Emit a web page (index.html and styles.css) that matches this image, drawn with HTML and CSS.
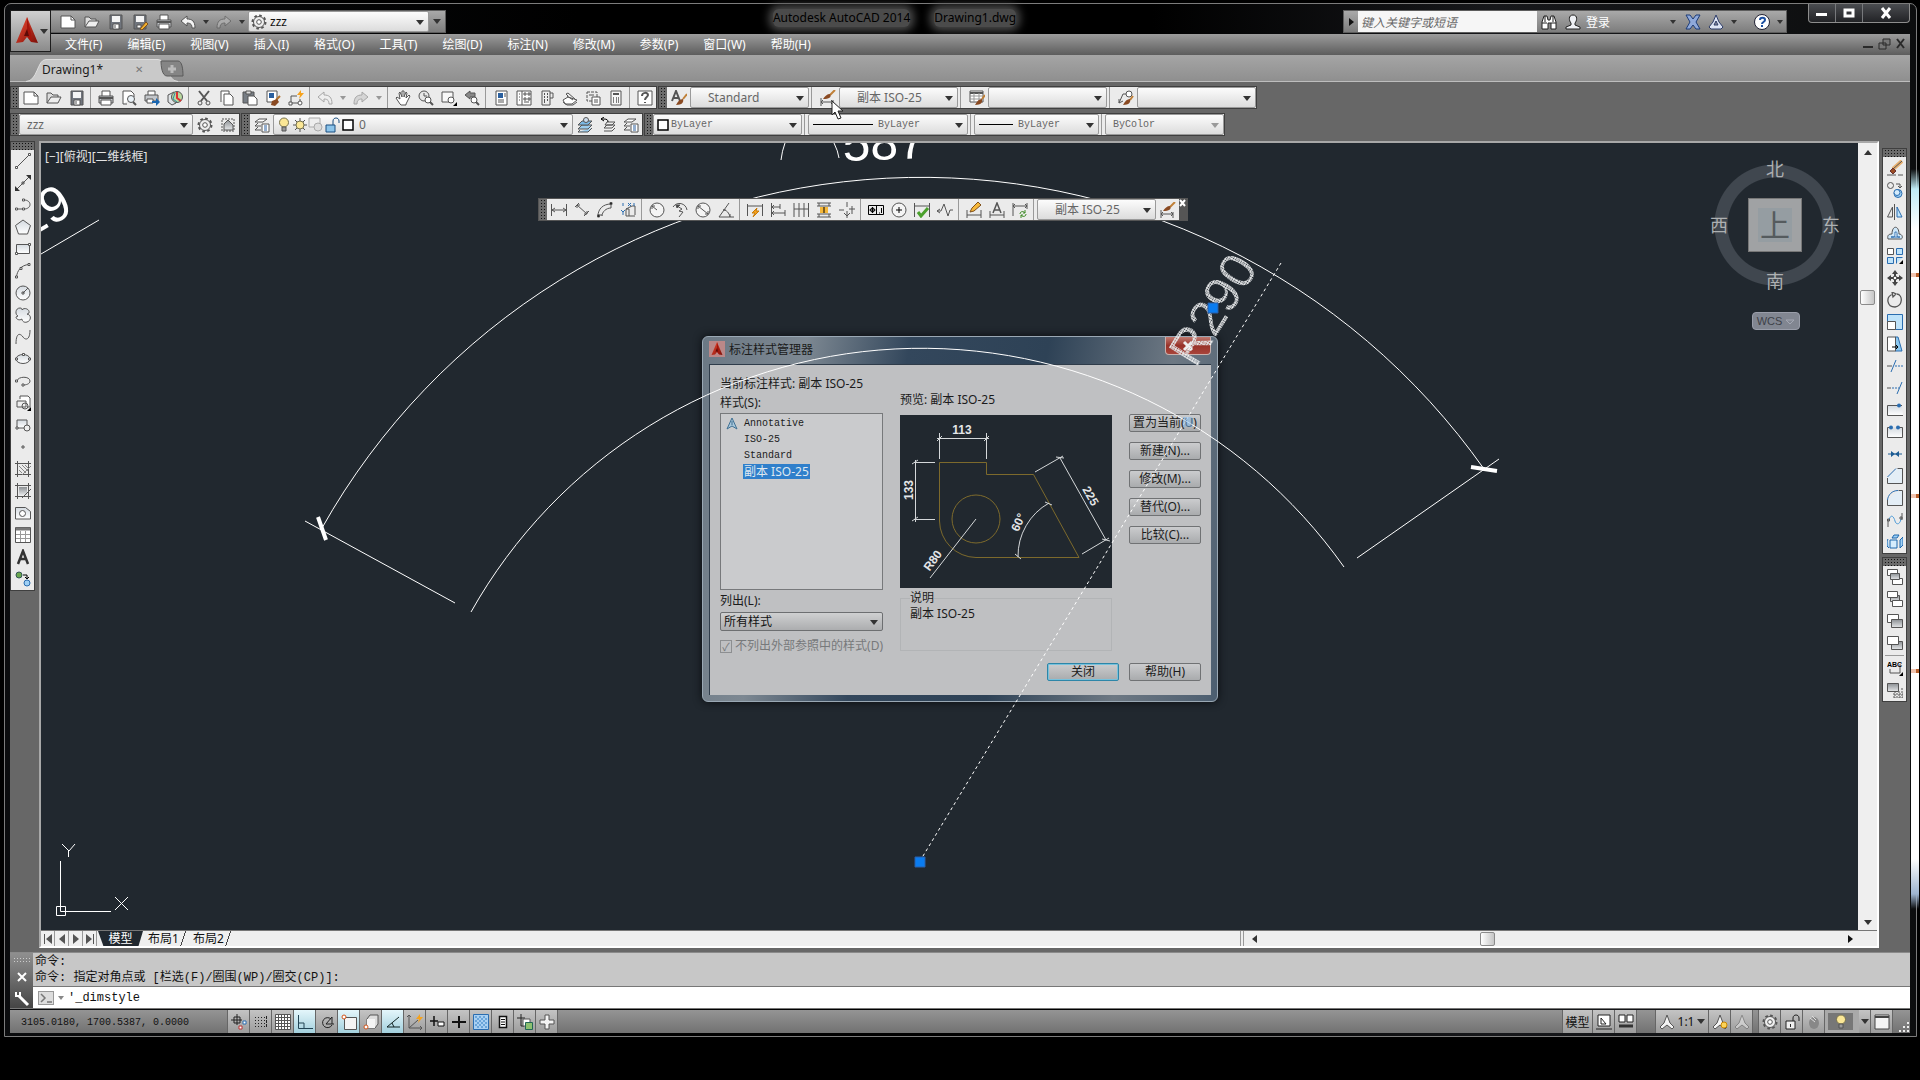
FILE: index.html
```html
<!DOCTYPE html>
<html lang="zh-CN">
<head>
    <meta charset="UTF-8">
    <meta name="viewport" content="width=device-width, initial-scale=1.0">
    <title>Autodesk AutoCAD 2014 - Drawing1.dwg</title>
    <link rel="stylesheet" href="styles.css">
</head>
<body>
    <!-- icon sprite -->
    <svg class="sprite" aria-hidden="true">
        <defs>
            <linearGradient id="g-red" x1="0" y1="0" x2="1" y2="1"><stop offset="0" stop-color="#f04a32"/><stop offset="1" stop-color="#7d0f08"/></linearGradient>
            <linearGradient id="g-grey" x1="0" y1="0" x2="0" y2="1"><stop offset="0" stop-color="#8c9094"/><stop offset="1" stop-color="#e4e6e8"/></linearGradient>
            <linearGradient id="g-paper" x1="0" y1="0" x2="0" y2="1"><stop offset="0" stop-color="#d4dae0"/><stop offset="1" stop-color="#fff"/></linearGradient>
            <pattern id="p-check" width="2" height="2" patternUnits="userSpaceOnUse"><path d="M0 0h1v1H0zM1 1h1v1H1z" fill="#fff" stroke="none"/><path d="M1 0h1v1H1z" fill="#aab0b5" stroke="none"/></pattern>
        </defs>
        <symbol id="i-logo" viewBox="0 0 24 28"><path d="M12 0L1 26l7-1 4-5 4 5 7 1z" fill="url(#g-red)" stroke="none"/><path d="M12 0l4 16 1 9-5-6z" fill="#a3150c" stroke="none"/><path d="M12 12l-3 7h5z" fill="#5d0a06" stroke="none"/></symbol>
        <symbol id="i-new" viewBox="0 0 16 16"><path d="M1 2h10l4 4v8H1z" fill="#fff"/><path d="M11 2v4h4"/></symbol>
        <symbol id="i-open" viewBox="0 0 16 16"><path d="M1 13V3h4l2 2h5v2" fill="#ddd"/><path d="M1 13l4-6h10l-3 6z" fill="#eee"/></symbol>
        <symbol id="i-save" viewBox="0 0 16 16"><path d="M2 1h12v14H2z" fill="#70757d"/><path d="M4 2h8v6H4z" fill="#f4f4f4" stroke="none"/><path d="M5 10h6v5H5z" fill="#fff"/><path d="M7 11v3"/></symbol>
        <symbol id="i-saveas" viewBox="0 0 16 16"><path d="M2 1h12v14H2z" fill="#70757d"/><path d="M4 2h8v6H4z" fill="#f4f4f4" stroke="none"/><path d="M5 11h4v3H5z" fill="#fff"/><path d="M8 15l6-7 2 2-6 6z" fill="#f0b030" stroke="#80501a"/></symbol>
        <symbol id="i-print" viewBox="0 0 16 16"><path d="M4 6V1h8v5" fill="#fff"/><path d="M1 6h14v7H1z" fill="#c3c6ca"/><path d="M3 10h10v5H3z" fill="#fff"/><path d="M1 8h14" stroke-width="2"/></symbol>
        <symbol id="i-undo" viewBox="0 0 16 16"><path d="M1 7l6-5v3c5 0 8 2 8 9h-3c0-3-1-5-5-5v3z" fill="#f4f4f4"/></symbol>
        <symbol id="i-redo" viewBox="0 0 16 16"><path d="M15 7L9 2v3C4 5 1 7 1 14h3c0-3 1-5 5-5v3z" fill="#bbb"/></symbol>
        <symbol id="i-gear" viewBox="0 0 16 16"><circle cx="8" cy="8" r="6.5" stroke-width="2" stroke-dasharray="2.6 2.4"/><circle cx="8" cy="8" r="5.5" fill="#eee"/><circle cx="8" cy="8" r="2.3" fill="#fff"/></symbol>
        <symbol id="i-preview" viewBox="0 0 16 16"><path d="M2 14V1h8l3 3v3M2 14h4" fill="#fff"/><circle cx="10" cy="9" r="3.5" fill="#eaf2f8"/><path d="M12 12l3 3" stroke-width="2"/></symbol>
        <symbol id="i-publish" viewBox="0 0 16 16"><path d="M4 5V1h7v4" fill="#fff"/><path d="M1 5h13v6H1z" fill="#c3c6ca"/><path d="M3 9h6v4H3z" fill="#fff"/><path d="M8 11h4V8l4 4-4 4v-3H8z" fill="#1a66b0" stroke="none"/></symbol>
        <symbol id="i-3dprint" viewBox="0 0 16 16"><path d="M1 5l6-3 2 11-4 2-4-3z" fill="#dfe3e6"/><circle cx="10" cy="7" r="5.5" fill="#b8d8a0"/><path d="M10 2v6l4 3" stroke="#d33" stroke-width="2"/><path d="M8 3l-2 6 4 3" stroke="#38a"/></symbol>
        <symbol id="i-cut" viewBox="0 0 16 16"><path d="M3 1l8 10M13 1L5 11" stroke-width="2"/><circle cx="4" cy="13" r="2"/><circle cx="12" cy="13" r="2"/></symbol>
        <symbol id="i-copy" viewBox="0 0 16 16"><path d="M2 12V1h8v3" fill="#fff"/><path d="M5 4h6l3 3v8H5z" fill="#fff"/></symbol>
        <symbol id="i-paste" viewBox="0 0 16 16"><path d="M1 2h11v11H1z" fill="#777d84"/><path d="M4 1h5v3H4z" fill="#ddd"/><path d="M6 6h6l3 3v6H6z" fill="#fff"/></symbol>
        <symbol id="i-match" viewBox="0 0 16 16"><path d="M2 1h10v11H2z" fill="#fff"/><path d="M4 3h5v5H4z" fill="#2a5f9e" stroke="none"/><path d="M15 6l-4 4" stroke="#b0702a" stroke-width="2"/><path d="M7 11l5-2 2 3-4 4-4-1z" fill="#8a4a22" stroke="none"/></symbol>
        <symbol id="i-block" viewBox="0 0 16 16"><path d="M3 6h6M3 6v7h9v-4"/><path d="M1 12h3v3H1z" fill="#fff"/><circle cx="12" cy="13" r="2" fill="#fff"/><path d="M13 0l-4 5h3l-1 4 5-6h-3z" fill="#f6a21c" stroke="none"/></symbol>
        <symbol id="i-pan" viewBox="0 0 16 16"><path d="M5 14L1 8l1-1 3 2-1-6 1-1 2 5V1h2v6l2-5 1 1-1 5 3-3 1 1-4 8v1H6z" fill="#fff"/></symbol>
        <symbol id="i-zoomrt" viewBox="0 0 16 16"><circle cx="6" cy="6" r="5" fill="#e8e8e8"/><path d="M6 3v3h3"/><circle cx="10" cy="10" r="3" fill="#fff"/><path d="M12 12l3 3" stroke-width="2"/></symbol>
        <symbol id="i-zoomwin" viewBox="0 0 16 16"><path d="M1 2h11v10H1z" fill="#f8f8f8"/><circle cx="10" cy="10" r="3" fill="#fff"/><path d="M12 16h4v-4z" fill="#000" stroke="none"/></symbol>
        <symbol id="i-zoomprev" viewBox="0 0 16 16"><path d="M1 5l5-4v2h5v4H6v2z" fill="#888"/><circle cx="10" cy="10" r="3" fill="#fff"/><path d="M12 12l3 3" stroke-width="2"/></symbol>
        <symbol id="i-props" viewBox="0 0 16 16"><path d="M3 1h11v14H3z" fill="#fff"/><path d="M5 3h5v5H5z" fill="#2a5f9e" stroke="none"/><path d="M5 10h6M5 12h6M12 3v4"/></symbol>
        <symbol id="i-dc" viewBox="0 0 16 16"><path d="M1 1h14v14H1z" fill="#fff"/><path d="M6 1v14M8 3h2v2H8zM12 3h2v2h-2zM8 8h2v2H8zM12 8h2v2h-2zM3 4h1M3 7h1M3 10h1M8 12h5"/></symbol>
        <symbol id="i-palette" viewBox="0 0 16 16"><path d="M3 1h8v14H3zM11 3h3v5h-3" fill="#eee"/><path d="M5 4h1M8 4h1M5 7h1M8 7h1M5 10h1M8 10h1M5 12h1" stroke-width="2"/></symbol>
        <symbol id="i-sheet" viewBox="0 0 16 16"><path d="M1 10l5-3 9 3-5 4H3z" fill="#fff"/><path d="M1 12l4 3h6l4-3M6 3l7 6M5 6l6 4M6 3l-2 1 2 2"/></symbol>
        <symbol id="i-markup" viewBox="0 0 16 16"><path d="M2 2h10v9H2z" stroke-dasharray="3 1"/><path d="M7 7h8v8H7z" fill="#fff"/><path d="M9 10h4M9 12h4M4 5h5"/></symbol>
        <symbol id="i-calc" viewBox="0 0 16 16"><path d="M3 1h10v14H3z" fill="#f6f6f6"/><path d="M5 4h6" stroke-width="2"/><path d="M5 8h1M8 8h1M10 8h1M5 10h1M8 10h1M10 10h1M5 12h1M8 12h1M10 12h1" stroke-width="1.5"/></symbol>
        <symbol id="i-help" viewBox="0 0 16 16"><path d="M1 1h14v14H1z" fill="#fff"/><path d="M5 6c0-4 6-4 6-1 0 2-3 2-3 5M8 12v1" stroke-width="2"/></symbol>
        <symbol id="i-textstyle" viewBox="0 0 16 16"><path d="M1 11L5 1l4 10M3 8h4" stroke-width="2"/><path d="M16 4l-4 5" stroke="#c08038" stroke-width="2"/><path d="M5 15c2-4 4-6 7-6 1 3-1 6-7 6z" fill="#8a4a22" stroke="none"/></symbol>
        <symbol id="i-dimstyle" viewBox="0 0 16 16"><path d="M1 8v8M13 10v6M1 12h12M3 10l-2 2 2 2M11 10l2 2-2 2"/><path d="M15 0l-5 5" stroke="#c08038" stroke-width="2"/><path d="M3 9c2-3 4-5 7-5 2 3-1 5-7 5z" fill="#8a4a22" stroke="none"/></symbol>
        <symbol id="i-tablestyle" viewBox="0 0 16 16"><path d="M1 1h13v11H1z" fill="#fff"/><path d="M1 3h13" stroke-width="2"/><path d="M1 6h13M1 9h13M5 3v9M10 3v9" stroke="#999"/><path d="M16 5l-3 4" stroke="#c08038" stroke-width="2"/><path d="M6 15c2-4 4-6 7-6 1 3-1 6-7 6z" fill="#8a4a22" stroke="none"/></symbol>
        <symbol id="i-mlstyle" viewBox="0 0 16 16"><path d="M1 13l4-9h5M1 9v4l4-2"/><circle cx="11" cy="4" r="3" fill="#fff"/><path d="M15 6l-3 4" stroke="#c08038" stroke-width="2"/><path d="M5 15c2-4 4-6 7-6 1 3-1 6-7 6z" fill="#8a4a22" stroke="none"/></symbol>
        <symbol id="i-wsave" viewBox="0 0 16 16"><path d="M2 2h12v12H2z" stroke-dasharray="2 1"/><path d="M4 13V7l4-4 5 5v5z" fill="url(#g-grey)"/></symbol>
        <symbol id="i-layers" viewBox="0 0 16 16"><path d="M1 5l4-3h8l-4 3zM1 9l3-3M1 9h6M1 13l3-3M1 13h6" fill="#fff"/><path d="M8 7h7v8H8z" fill="#fff"/><path d="M10 9h3M10 11h3M10 13h3" stroke="#2a5f9e"/></symbol>
        <symbol id="i-laycur" viewBox="0 0 16 16"><path d="M1 12l4-4h10l-4 4zM1 15l2-2M1 15h10l4-4" fill="#9ccdee"/><path d="M1 8l4-4h10l-4 4z" fill="#7ab8e4"/><circle cx="9" cy="3" r="2.5" fill="#cde"/></symbol>
        <symbol id="i-layprev" viewBox="0 0 16 16"><path d="M4 11l3-3h8l-3 3zM4 14h8l3-3M5 8l2-3h8l-3 3z" fill="#eee"/><path d="M1 2h3c3 0 4 1 4 3M4 0L1 2l3 2" stroke="#000"/></symbol>
        <symbol id="i-bulb" viewBox="0 0 16 16"><circle cx="8" cy="5.5" r="4.5" fill="#fbe796" stroke="#77724e"/><path d="M6 10h4v4H6z" fill="#999"/></symbol>
        <symbol id="i-sun" viewBox="0 0 16 16"><path d="M8 1v14M1 8h14M3 3l10 10M13 3L3 13" stroke="#555"/><circle cx="8" cy="8" r="4" fill="#fbe796" stroke="#77724e"/></symbol>
        <symbol id="i-vpfreeze" viewBox="0 0 16 16"><path d="M1 1h11v9H1z" stroke="#aaa" fill="#eee"/><circle cx="10" cy="10" r="4" fill="#ddd" stroke="#aaa"/></symbol>
        <symbol id="i-lock" viewBox="0 0 16 16"><path d="M2 8h9v7H2z" fill="#8cc4ea" stroke="#1b4f80"/><path d="M9 8V4c0-4 6-4 6 0v2" stroke="#1b4f80"/></symbol>
        <symbol id="i-swatch" viewBox="0 0 16 16"><path d="M3 3h10v10H3z" fill="#fff" stroke="#000" stroke-width="1.5"/></symbol>
        <!-- draw -->
        <symbol id="i-line" viewBox="0 0 16 16"><path d="M2 14L14 2"/><path d="M.5 13.500h2v2h-2zM13.500.5h2v2h-2z" fill="#fff"/></symbol>
        <symbol id="i-xline" viewBox="0 0 16 16"><path d="M1 15L15 1M7 7h2v2H7z"/><path d="M0 16v-5l5 5zM16 0v5l-5-5z" fill="#333" stroke="none"/></symbol>
        <symbol id="i-pline" viewBox="0 0 16 16"><path d="M2 12h7c8 0 8-9 0-9"/><path d="M.5 11h2v2h-2zM7.500 11h2v2h-2zM7.500 2h2v2h-2z" fill="#fff"/></symbol>
        <symbol id="i-polygon" viewBox="0 0 16 16"><path d="M8 1l7.500 5.500L12.500 15h-9L.5 6.500z" fill="url(#g-paper)"/></symbol>
        <symbol id="i-rect" viewBox="0 0 16 16"><path d="M1.500 3.500h13v9h-13z" fill="url(#g-paper)"/><path d="M.5 11.500h2v2h-2zM13.500 2.500h2v2h-2z" fill="#fff"/></symbol>
        <symbol id="i-arc" viewBox="0 0 16 16"><path d="M1.500 14C2 8 6 2 14 1.500"/><path d="M.5 13h2v2h-2zM5 4.500h2v2H5zM13 .5h2v2h-2z" fill="#fff"/></symbol>
        <symbol id="i-circle" viewBox="0 0 16 16"><circle cx="8" cy="8" r="7" fill="url(#g-paper)"/><path d="M8 8l5-5M7 7h2v2H7z"/></symbol>
        <symbol id="i-cloud" viewBox="0 0 16 16"><path d="M3 9C0 8 0 1 5 1c2 0 2 1 2 2 2-3 8-1 7 3-1 1-2 1-2 1 5 1 4 7 0 8-3 1-5-1-5-3-3 2-6 0-6-2z" fill="url(#g-paper)"/></symbol>
        <symbol id="i-spline" viewBox="0 0 16 16"><path d="M1 15C1 2 6 5 8 8s7 4 7-7"/></symbol>
        <symbol id="i-ellipse" viewBox="0 0 16 16"><ellipse cx="8" cy="8" rx="7" ry="4.5" fill="url(#g-paper)"/><path d="M.5 7h2v2h-2zM13.500 7h2v2h-2zM7.500 2.500h2v2h-2z" fill="#fff"/></symbol>
        <symbol id="i-earc" viewBox="0 0 16 16"><path d="M2 8c1-5 13-5 13 0 0 3-4 4-7 4"/><path d="M.5 7h2v2h-2zM7 11h2v2H7z" fill="#fff"/></symbol>
        <symbol id="i-insert" viewBox="0 0 16 16"><path d="M5 4V1h8l2 2v9h-3" fill="#fff"/><path d="M2 12V6h9v6z" fill="#eee"/><circle cx="10" cy="11" r="3"/><path d="M12 16h4v-4z" fill="#000" stroke="none"/></symbol>
        <symbol id="i-mkblock" viewBox="0 0 16 16"><path d="M2 11V3h10v8z" fill="url(#g-paper)"/><circle cx="12" cy="11" r="3" fill="#eee"/><path d="M1 10h2v2H1z" fill="#fff"/></symbol>
        <symbol id="i-point" viewBox="0 0 16 16"><path d="M7 7h2v2H7z"/></symbol>
        <symbol id="i-hatch" viewBox="0 0 16 16"><path d="M0 2.500h16M0 13.500h16M2.500 0v16M13.500 0v16"/><path d="M4 5l7 7M4 9l3 3M7 4l6 6M10 4l3 3M7 14l9-9" stroke="#888"/></symbol>
        <symbol id="i-gradient" viewBox="0 0 16 16"><path d="M4 4h8v8H4z" fill="url(#g-grey)" stroke="none"/><path d="M0 2.500h16M0 13.500h16M2.500 0v16M13.500 0v16M7 15l9-9"/></symbol>
        <symbol id="i-region" viewBox="0 0 16 16"><path d="M.5 14V2.500h10l5 4V14z" fill="url(#g-paper)"/><circle cx="7.5" cy="8.5" r="3" fill="#fff"/></symbol>
        <symbol id="i-table" viewBox="0 0 16 16"><path d="M.5.5h15v15H.5z" fill="#fff"/><path d="M1 2h14" stroke="#777" stroke-width="3"/><path d="M1 7.500h14M1 11.500h14M5.500 4v11M10.500 4v11" stroke="#999"/></symbol>
        <symbol id="i-mtext" viewBox="0 0 16 16"><path d="M3 15L8 2l5 13M5 10h6" stroke="#333" stroke-width="2.5"/></symbol>
        <symbol id="i-addsel" viewBox="0 0 16 16"><circle cx="4" cy="4" r="3" fill="#6aa84f" stroke="#355"/><circle cx="12" cy="12" r="3" fill="#9fd0f5" stroke="#2a6db0"/><path d="M8 4h4v4M10 6l2 2 2-2" stroke="#000"/></symbol>
        <!-- modify -->
        <symbol id="i-erase" viewBox="0 0 16 16"><path d="M0 15h9M11 15h5"/><path d="M15 1L6 9" stroke="#e8b070" stroke-width="4"/><path d="M15 1L6 9"/><path d="M3 11l3-3 3 3-3 3z" fill="#9a4a22" stroke="#633"/></symbol>
        <symbol id="i-mcopy" viewBox="0 0 16 16"><circle cx="3.5" cy="3.5" r="3"/><path d="M9 2h4v4M11 4l2 2 2-2"/><circle cx="11" cy="11.5" r="4" fill="#9fd0f5" stroke="#2a6db0"/><circle cx="10" cy="10.5" r="3" fill="#d5ecfc" stroke="#2a6db0"/></symbol>
        <symbol id="i-mirror" viewBox="0 0 16 16"><path d="M7.500 0v16"/><path d="M5.500 3v10H.5z"/><path d="M10 3v10h5z" fill="#bfe3fa" stroke="#2a6db0"/></symbol>
        <symbol id="i-offset" viewBox="0 0 16 16"><path d="M1 13c-1-4 1-5 4-5C5-1 12-1 12 8c4 0 4 5 2 5z" fill="#cfe8fa"/><path d="M4 11h2c2 0 2-1 2-5 2 0 2 0 2 3s2 2 3 2z" stroke="#2a6db0" fill="#fff"/></symbol>
        <symbol id="i-array" viewBox="0 0 16 16"><path d="M.5.5h6v6h-6z" fill="#fff"/><path d="M9.500.5h6v6h-6zM.5 9.500h6v6h-6zM9.500 15.500v-6h6" fill="#bfe3fa" stroke="#2a6db0"/><path d="M12 16h4v-4z" fill="#000" stroke="none"/></symbol>
        <symbol id="i-move" viewBox="0 0 16 16"><path d="M8 0l3 4H9v2H7V4H5zM8 16l3-4H9v-2H7v2H5zM0 8l4-3v2h2v2H4v2zM16 8l-4-3v2h-2v2h2v2z" fill="#444" stroke="none"/><path d="M6.500 6.500h3v3h-3z" fill="#fff"/></symbol>
        <symbol id="i-rotate" viewBox="0 0 16 16"><path d="M6 2C-2 5 0 15 8 15c8-1 8-12 2-13M5 0l4 2-3 3z" stroke-width="1.3"/></symbol>
        <symbol id="i-scale" viewBox="0 0 16 16"><path d="M.5.5h15v15h-15z" fill="#bfe3fa" stroke="#2a6db0"/><path d="M.5 7.500h8v8h-8z" fill="#fff"/></symbol>
        <symbol id="i-stretch" viewBox="0 0 16 16"><path d="M8 1h3l4 14H8z" fill="#8cc8f0" stroke="#2a6db0"/><path d="M.5 1h8v14h-8z" fill="#fff"/><path d="M5 11h6M9 9l2 2-2 2" stroke="#000"/></symbol>
        <symbol id="i-trim" viewBox="0 0 16 16"><path d="M0 8h5"/><path d="M4 14L9 2" stroke="#2a6db0"/><path d="M8 8h8" stroke="#2a6db0" stroke-dasharray="2 1"/></symbol>
        <symbol id="i-extend" viewBox="0 0 16 16"><path d="M0 8h4"/><path d="M10 14l5-12" stroke="#2a6db0"/><path d="M5 8h7" stroke="#2a6db0" stroke-dasharray="2 1"/></symbol>
        <symbol id="i-breakp" viewBox="0 0 16 16"><path d="M15 3.500H.5v10H16" fill="url(#g-paper)"/><circle cx="12" cy="3.5" r="2" fill="#2a6db0" stroke="none"/></symbol>
        <symbol id="i-break" viewBox="0 0 16 16"><path d="M4 3.500H.5v10h15v-10H12" fill="url(#g-paper)"/><circle cx="4" cy="3.5" r="2" fill="#2a6db0" stroke="none"/><circle cx="11" cy="3.5" r="2" fill="#2a6db0" stroke="none"/></symbol>
        <symbol id="i-join" viewBox="0 0 16 16"><path d="M1 8h14" stroke="#1d5c94"/><path d="M4 5l4 3-4 3zM12 5L8 8l4 3z" fill="#1d5c94" stroke="none"/></symbol>
        <symbol id="i-chamfer" viewBox="0 0 16 16"><path d="M.5 9v6.500h15V.5H10z" fill="#e4eef6" stroke="none"/><path d="M.5 10v5.500h15V.5h-5"/><path d="M.5 9L9 .5" stroke="#2a6db0"/></symbol>
        <symbol id="i-fillet" viewBox="0 0 16 16"><path d="M.5 10v5.500h15V.5h-4" fill="#e4eef6"/><path d="M.5 10C1 5 5 .5 11 .5" stroke="#2a6db0"/></symbol>
        <symbol id="i-blend" viewBox="0 0 16 16"><path d="M1 15V7M15 1v7"/><path d="M2 8c2-7 5-3 6 1s5 4 6-2" stroke="#4b9ad8"/><path d="M.5 7h2v2h-2zM13 5h2v2h-2z"/></symbol>
        <symbol id="i-explode" viewBox="0 0 16 16"><path d="M3 6h7v8H3z" fill="#d5ecfc" stroke="#1d66ac"/><path d="M5 4l2-3h5l-2 3zM13 6l3-3v8l-3 3zM1 5L0 7v5l2 2" fill="#9fd0f5" stroke="#1d66ac"/></symbol>
        <symbol id="i-front" viewBox="0 0 16 16"><path d="M.5.5h10v6H.5zM5.500 9.500h10v6h-10z" fill="#fff"/><path d="M3.500 4.500h9v6h-9z" fill="url(#g-grey)"/></symbol>
        <symbol id="i-back" viewBox="0 0 16 16"><path d="M3.500 4.500h9v6h-9z" fill="url(#g-grey)"/><path d="M.5.5h10v6H.5zM5.500 9.500h10v6h-10z" fill="#fff"/></symbol>
        <symbol id="i-above" viewBox="0 0 16 16"><path d="M.5 1.500h11v8H.5z" fill="#fff"/><path d="M4.500 6.500h11v8h-11z" fill="url(#g-grey)"/></symbol>
        <symbol id="i-under" viewBox="0 0 16 16"><path d="M4.500 6.500h11v8h-11z" fill="url(#g-grey)"/><path d="M.5 1.500h11v8H.5z" fill="#fff"/></symbol>
        <symbol id="i-annfront" viewBox="0 0 16 16"><path d="M3 9v4h10V4"/><path d="M12 16h4v-4z" fill="#000" stroke="none"/></symbol>
        <symbol id="i-hatchback" viewBox="0 0 16 16"><path d="M6 12h10M6 15h10M8 9v7M12 9v7M15 6v10" stroke-dasharray="2 1"/><path d="M.5 1.500h11v8H.5z" fill="url(#g-grey)"/></symbol>
        <!-- dimension -->
        <symbol id="d-lin" viewBox="0 0 16 16"><path d="M.5 2v12M15.500 2v12M1 8h14M4 6L1 8l3 2M12 6l3 2-3 2"/></symbol>
        <symbol id="d-ali" viewBox="0 0 16 16"><path d="M1 5l4-4M10 14l5-5M3 3l10 9M3 6V3h3M13 9v3h-3"/></symbol>
        <symbol id="d-arc" viewBox="0 0 16 16"><path d="M1 14C1 7 6 2 14 2M5 14c0-4 4-8 9-8M.5 13h5M14 .5V6"/><path d="M.5 13h2v2h-2zM13 .5h2v2h-2z" fill="#000"/></symbol>
        <symbol id="d-ord" viewBox="0 0 16 16"><path d="M6 7h3v7M6 14h9M6 14V7l6-3h3v9"/><path d="M3 1v3M8 1l3 3M11 1L8 4M14 1v3M1 8l2 2v3M5 8l-2 2" stroke="#2a6db0"/></symbol>
        <symbol id="d-rad" viewBox="0 0 16 16"><circle cx="8" cy="8" r="7" fill="#f4f4f4"/><path d="M8 8L3 4M3 7V4h3"/></symbol>
        <symbol id="d-jog" viewBox="0 0 16 16"><path d="M1 5c4-6 13-4 14 3M5 4l5 3-3 2 4 1-4 5"/><path d="M4 3h4l-3 3z" fill="#444"/></symbol>
        <symbol id="d-dia" viewBox="0 0 16 16"><circle cx="8" cy="8" r="7" fill="#f4f4f4"/><path d="M3 4l10 8M3 7V4h3M13 9v3h-3"/></symbol>
        <symbol id="d-ang" viewBox="0 0 16 16"><path d="M11 1L1 15h15M5 8c4 0 6 3 7 7M5 8h3M12 12v3"/></symbol>
        <symbol id="d-quick" viewBox="0 0 16 16"><path d="M.5 2v12M15.500 2v12M1 4h14"/><path d="M10 6l-5 5h3l-2 4 6-6H9z" fill="#f6a21c" stroke="#c77a08"/></symbol>
        <symbol id="d-base" viewBox="0 0 16 16"><path d="M1.500 1v14M10 2v5M15 8v6M2 5h8M2 11h13M4 3L2 5l2 2M4 9l-2 2 2 2"/></symbol>
        <symbol id="d-cont" viewBox="0 0 16 16"><path d="M1 1v14M6 1v14M11 1v14M15.500 1v14M1 7h15"/></symbol>
        <symbol id="d-space" viewBox="0 0 16 16"><path d="M1 1h14M1 15h14M1 4h14M1 12h14M3 1v3M13 1v3M3 12v3M13 12v3"/><path d="M4 5h8v6H4z" fill="#f6b83a" stroke="none"/><path d="M8 5v6" stroke="#000"/></symbol>
        <symbol id="d-break" viewBox="0 0 16 16"><path d="M8 0v5M8 9v7M0 8h5M10 7h6M13 4v8M5 11l3 3 3-3"/></symbol>
        <symbol id="d-tol" viewBox="0 0 16 16"><path d="M.5 3.500h15v9H.5zM8.500 4v8M11 11h1M13.500 6v5" stroke="#000"/><circle cx="4.5" cy="8" r="2" stroke="#000"/><path d="M4.500 5v6M1.500 8h6" stroke="#000"/></symbol>
        <symbol id="d-center" viewBox="0 0 16 16"><circle cx="8" cy="8" r="7" fill="#f4f4f4"/><path d="M8 5v6M5 8h6" stroke="#000"/></symbol>
        <symbol id="d-insp" viewBox="0 0 16 16"><path d="M.5 1v14M15.500 1v14M1 4h14"/><path d="M4 10l3 4 7-8" stroke="#4aa02c" stroke-width="3"/></symbol>
        <symbol id="d-jogl" viewBox="0 0 16 16"><path d="M0 9h4l3-7 4 12 2-6h3M0 9l3-2M0 9l3 2"/></symbol>
        <symbol id="d-edit" viewBox="0 0 16 16"><path d="M1 8v8M15 8v8M1 13h14"/><path d="M4 10l2-4 6-6 3 3-7 6z" fill="#f6b83a" stroke="#80501a"/></symbol>
        <symbol id="d-tedit" viewBox="0 0 16 16"><path d="M1 9v7M15 9v7M1 13h14"/><path d="M4 11L8 1l4 10M5 8h6" stroke-width="1.5"/></symbol>
        <symbol id="d-upd" viewBox="0 0 16 16"><path d="M1 1v13M15 1v6M1 4h14M3 2L1 4l2 2M13 2l2 2-2 2"/><path d="M8 12c0-3 4-3 5-1M14 12c0 3-4 3-5 1M13 8v3h-2M9 16v-3h2" stroke="#3b8a22"/></symbol>
        <!-- status bar -->
        <symbol id="s-infer" viewBox="0 0 16 16"><path d="M0 6h11M6 0v11M3 3h6v6H3z" stroke="#222"/><path d="M12 7h3v3h-3z" fill="#fff" stroke="#2a6db0"/><path d="M8 12h3v3H8z" fill="#fff" stroke="#b33"/></symbol>
        <symbol id="s-snap" viewBox="0 0 16 16"><path d="M2 3.500h10M2 6.500h10M2 9.500h10M2 12.500h10" stroke="#222" stroke-dasharray="1 2"/><path d="M13.500 2v12" stroke="#222" stroke-dasharray="3 1"/></symbol>
        <symbol id="s-grid" viewBox="0 0 16 16"><path d="M.5.5h15v15H.5z" fill="#fff"/><path d="M3.500 0v16M6.500 0v16M9.500 0v16M12.500 0v16M0 3.500h16M0 6.500h16M0 9.500h16M0 12.500h16"/></symbol>
        <symbol id="s-ortho" viewBox="0 0 16 16"><path d="M1.500 1v13.500H16M2 9h5v5" stroke="#245"/></symbol>
        <symbol id="s-polar" viewBox="0 0 16 16"><path d="M12 5A5 5 0 1 0 13 11M7 10h8M7 10l6-7v7" stroke="#222"/></symbol>
        <symbol id="s-osnap" viewBox="0 0 16 16"><path d="M3.500 3.500h12v12h-12z" fill="#f4f4f4"/><circle cx="3" cy="3" r="2" fill="#fff" stroke="#d2541a"/></symbol>
        <symbol id="s-3dosnap" viewBox="0 0 16 16"><path d="M4 5l3-4h8v9l-3 4H4z" fill="#ddd"/><path d="M4 5h8v9H4z" fill="#f4f4f4" stroke="none"/><circle cx="3" cy="13" r="2" fill="#fff" stroke="#d2541a"/></symbol>
        <symbol id="s-otrack" viewBox="0 0 16 16"><path d="M14 3L2 13h13M7 9l2 4" stroke="#122"/></symbol>
        <symbol id="s-ducs" viewBox="0 0 16 16"><path d="M2 1v13h13M2 14L11 6M0 3l2-2 2 2M13 12l2 2-2 2"/><path d="M13 0L9 5h3l-1 4 5-6h-3z" fill="#f6a21c" stroke="none"/></symbol>
        <symbol id="s-dyn" viewBox="0 0 16 16"><path d="M5 2v10M1 7h8" stroke="#111" stroke-width="1.5"/><path d="M9 8h6v4H9z" fill="#fff" stroke="#111"/></symbol>
        <symbol id="s-lwt" viewBox="0 0 16 16"><path d="M8 2v12M1 8h14" stroke="#111" stroke-width="2"/></symbol>
        <symbol id="s-tpy" viewBox="0 0 16 16"><path d="M.5.5h15v15H.5z" fill="#a9d0f2" stroke="#2a6db0"/><path d="M2 3h12M2 7h12M2 11h12" stroke="#6aa5da" stroke-width="2" stroke-dasharray="2 2"/><path d="M4 5h10M4 9h10M4 13h10" stroke="#6aa5da" stroke-width="2" stroke-dasharray="2 2"/></symbol>
        <symbol id="s-qp" viewBox="0 0 16 16"><path d="M4.500 2.500h7v11h-7z" fill="#fff" stroke="#111" stroke-width="1.5"/><path d="M6 5.500h4M6 8h4M6 10.500h4" stroke="#111"/></symbol>
        <symbol id="s-sc" viewBox="0 0 16 16"><path d="M0 4h8M4 0v8M4 8v4h3" stroke="#222"/><path d="M6 5h7v7H6z" fill="#fff"/><path d="M8.500 8.500h7v7h-7z" fill="#8cc070" stroke="#265"/></symbol>
        <symbol id="s-am" viewBox="0 0 16 16"><path d="M6 1h4v5h5v4h-5v5H6v-5H1V6h5z" fill="#f4f4f4"/></symbol>
        <symbol id="s-layout" viewBox="0 0 16 16"><path d="M2 1h12v11H2z" fill="#fff" stroke="#222"/><path d="M5 4l5 6H5zM0 15h16" stroke="#222"/></symbol>
        <symbol id="s-views" viewBox="0 0 16 16"><path d="M1 1h6v7H1zM9 1h6v7H9z" fill="#fff" stroke="#222"/><path d="M1 12h14" stroke="#333" stroke-width="3"/></symbol>
        <symbol id="s-ann" viewBox="0 0 16 16"><path d="M8 1l3 8 4 4-2 2-5-4-5 4-2-2 4-4z" fill="#f4f4f4"/></symbol>
        <symbol id="s-lock" viewBox="0 0 16 16"><path d="M2 7h9v8H2z" fill="#eee" stroke="#222"/><path d="M9 7V4c0-4 6-4 6 0v3M6.500 10v3" stroke="#222"/></symbol>
        <symbol id="s-hw" viewBox="0 0 16 16"><ellipse cx="8" cy="9" rx="5" ry="6" fill="#888" stroke="none"/><path d="M4 4l5 4M6 2l4 4" stroke="#ddd"/></symbol>
        <symbol id="s-clean" viewBox="0 0 16 16"><path d="M1 1h14v14H1z" fill="#f4f4f4" stroke="#444"/><path d="M1 3h14" stroke="#444" stroke-width="2"/></symbol>
        <symbol id="t-find" viewBox="0 0 16 16"><path d="M1 8l2-6h3l1 4h2l1-4h3l2 6v7h-5V9H7v6H1z" fill="#fff" stroke="#222"/><path d="M1 9h5M10 9h5M4 2v6M12 2v6" stroke="#222"/></symbol>
        <symbol id="t-user" viewBox="0 0 16 16"><path d="M8 1c5 0 4 6 2 8v2l5 2v2H1v-2l5-2V9C4 7 3 1 8 1z" fill="#eef0f4" stroke="#222"/></symbol>
        <symbol id="t-x" viewBox="0 0 16 16"><path d="M1 1h4l3 4 3-4h4l-4 7 4 7h-4l-3-4-3 4H1l4-7z" fill="#8fa9da" stroke="#1d3c78"/></symbol>
        <symbol id="t-a360" viewBox="0 0 16 16"><path d="M8 1l3 7 4 5-2 2H3l-2-2 4-5z" fill="#dde4f5" stroke="#2d3c68"/><path d="M8 7l2 4H6z" fill="#889" stroke="#2d3c68"/></symbol>
        <symbol id="t-help" viewBox="0 0 16 16"><circle cx="8" cy="8" r="7.5" fill="#fff" stroke="#223"/><path d="M6 6c0-3 5-3 5 0 0 2-3 2-3 4M8 11v2" stroke="#1c4fa0" stroke-width="2"/></symbol>
    </svg>

    <div class="app">
        <button class="app-menu" aria-label="应用程序菜单"><svg class="logo"><use href="#i-logo"/></svg><i class="tri"></i></button>

        <header class="title-bar">
            <div class="quick-access">
                <button class="tb" aria-label="新建"><svg class="ic"><use href="#i-new"/></svg></button>
                <button class="tb" aria-label="打开"><svg class="ic"><use href="#i-open"/></svg></button>
                <button class="tb" aria-label="保存"><svg class="ic"><use href="#i-save"/></svg></button>
                <button class="tb" aria-label="另存为"><svg class="ic"><use href="#i-saveas"/></svg></button>
                <button class="tb" aria-label="打印"><svg class="ic"><use href="#i-print"/></svg></button>
                <button class="tb" aria-label="放弃"><svg class="ic"><use href="#i-undo"/></svg></button>
                <button class="tb-arrow" aria-label="放弃列表"><i class="tri"></i></button>
                <button class="tb" aria-label="重做"><svg class="ic dim"><use href="#i-redo"/></svg></button>
                <button class="tb-arrow" aria-label="重做列表"><i class="tri"></i></button>
                <span class="combo workspace-combo"><svg class="ic combo-icon"><use href="#i-gear"/></svg><select aria-label="工作空间"><option>zzz</option></select></span>
                <button class="qa-more" aria-label="自定义"><i class="tri"></i></button>
            </div>
            <div class="caption"><span>Autodesk AutoCAD 2014</span><span>Drawing1.dwg</span></div>
            <div class="info-center">
                <button class="info-toggle" aria-label="展开"><i class="tri tri-right"></i></button>
                <input class="info-search" type="text" placeholder="键入关键字或短语" aria-label="搜索">
                <button class="tb" aria-label="查找"><svg class="ic"><use href="#t-find"/></svg></button>
                <button class="sign-in"><svg class="ic"><use href="#t-user"/></svg>登录<i class="tri"></i></button>
                <button class="tb" aria-label="Exchange"><svg class="ic"><use href="#t-x"/></svg></button>
                <button class="tb" aria-label="360"><svg class="ic"><use href="#t-a360"/></svg></button>
                <button class="tb-arrow" aria-label="更多"><i class="tri"></i></button>
                <button class="tb info-help" aria-label="帮助"><svg class="ic"><use href="#t-help"/></svg></button>
                <button class="tb-arrow" aria-label="帮助列表"><i class="tri"></i></button>
            </div>
            <div class="win-buttons">
                <button aria-label="最小化"><svg width="14" height="14"><path d="M1 7h11v3H1z" fill="#fff"/></svg></button>
                <button aria-label="最大化"><svg width="14" height="14"><path d="M3 4h8v6H3z" fill="none" stroke="#fff" stroke-width="3"/></svg></button>
                <button class="win-close" aria-label="关闭"><svg width="14" height="14"><path d="M3 2l8 10M11 2L3 12" stroke="#fff" stroke-width="3"/></svg></button>
            </div>
        </header>

        <nav class="menu-bar">
            <button>文件(F)</button><button>编辑(E)</button><button>视图(V)</button><button>插入(I)</button><button>格式(O)</button><button>工具(T)</button><button>绘图(D)</button><button>标注(N)</button><button>修改(M)</button><button>参数(P)</button><button>窗口(W)</button><button>帮助(H)</button>
            <div class="doc-buttons">
                <svg width="48" height="14"><path d="M1 10h10" stroke="#2a2a2a" stroke-width="2"/><path d="M21 2h7v6h-7zM17 6h7v6h-7z" fill="#777" stroke="#2a2a2a"/><path d="M35 2l7 9M42 2l-7 9" stroke="#2a2a2a" stroke-width="2"/></svg>
            </div>
        </nav>

        <div class="file-tabs">
            <svg class="tab-shape" width="162" height="23"><path d="M0 22.500C12 22 11 .5 20 .5h112C142 .5 140 22 152 22.500" fill="#c9c9c9" stroke="#dedede"/></svg>
            <button class="file-tab">Drawing1*<span class="tab-close">✕</span></button>
            <button class="new-tab" aria-label="新图形"><svg width="24" height="17"><path d="M1 1h17c4 0 5 8 5 15H7C2 16 1 6 1 1z" fill="#858585" stroke="#5a5a5a"/><path d="M12 5v8M8 9h8" stroke="#bbb" stroke-width="3"/></svg></button>
        </div>

        <div class="dock">
            <div class="dock-row">
                <div class="toolbar">
                    <i class="grip"></i>
                    <button class="tb" aria-label="新建"><svg class="ic"><use href="#i-new"/></svg></button>
                    <button class="tb" aria-label="打开"><svg class="ic"><use href="#i-open"/></svg></button>
                    <button class="tb" aria-label="保存"><svg class="ic"><use href="#i-save"/></svg></button>
                    <i class="sep"></i>
                    <button class="tb" aria-label="打印"><svg class="ic"><use href="#i-print"/></svg></button>
                    <button class="tb" aria-label="打印预览"><svg class="ic"><use href="#i-preview"/></svg></button>
                    <button class="tb" aria-label="发布"><svg class="ic"><use href="#i-publish"/></svg></button>
                    <button class="tb" aria-label="三维打印"><svg class="ic"><use href="#i-3dprint"/></svg></button>
                    <i class="sep"></i>
                    <button class="tb" aria-label="剪切"><svg class="ic"><use href="#i-cut"/></svg></button>
                    <button class="tb" aria-label="复制"><svg class="ic"><use href="#i-copy"/></svg></button>
                    <button class="tb" aria-label="粘贴"><svg class="ic"><use href="#i-paste"/></svg></button>
                    <button class="tb" aria-label="特性匹配"><svg class="ic"><use href="#i-match"/></svg></button>
                    <button class="tb" aria-label="块编辑器"><svg class="ic"><use href="#i-block"/></svg></button>
                    <i class="sep"></i>
                    <button class="tb" aria-label="放弃"><svg class="ic faint"><use href="#i-undo"/></svg></button>
                    <button class="tb-arrow faint" aria-label="放弃列表"><i class="tri"></i></button>
                    <button class="tb" aria-label="重做"><svg class="ic faint"><use href="#i-redo"/></svg></button>
                    <button class="tb-arrow faint" aria-label="重做列表"><i class="tri"></i></button>
                    <i class="sep"></i>
                    <button class="tb" aria-label="平移"><svg class="ic"><use href="#i-pan"/></svg></button>
                    <button class="tb" aria-label="实时缩放"><svg class="ic"><use href="#i-zoomrt"/></svg></button>
                    <button class="tb" aria-label="窗口缩放"><svg class="ic"><use href="#i-zoomwin"/></svg></button>
                    <button class="tb" aria-label="缩放上一个"><svg class="ic"><use href="#i-zoomprev"/></svg></button>
                    <i class="sep"></i>
                    <button class="tb" aria-label="特性"><svg class="ic"><use href="#i-props"/></svg></button>
                    <button class="tb" aria-label="设计中心"><svg class="ic"><use href="#i-dc"/></svg></button>
                    <button class="tb" aria-label="工具选项板"><svg class="ic"><use href="#i-palette"/></svg></button>
                    <button class="tb" aria-label="图纸集"><svg class="ic"><use href="#i-sheet"/></svg></button>
                    <button class="tb" aria-label="标记集"><svg class="ic"><use href="#i-markup"/></svg></button>
                    <button class="tb" aria-label="计算器"><svg class="ic"><use href="#i-calc"/></svg></button>
                    <i class="sep"></i>
                    <button class="tb" aria-label="帮助"><svg class="ic"><use href="#i-help"/></svg></button>
                </div>
                <div class="toolbar styles-toolbar">
                    <i class="grip"></i>
                    <button class="tb" aria-label="文字样式"><svg class="ic"><use href="#i-textstyle"/></svg></button>
                    <span class="combo w-style"><select aria-label="文字样式"><option>Standard</option></select></span>
                    <i class="sep"></i>
                    <button class="tb" aria-label="标注样式"><svg class="ic"><use href="#i-dimstyle"/></svg></button>
                    <span class="combo w-style"><select aria-label="标注样式"><option>副本 ISO-25</option></select></span>
                    <i class="sep"></i>
                    <button class="tb" aria-label="表格样式"><svg class="ic"><use href="#i-tablestyle"/></svg></button>
                    <span class="combo w-style"><select aria-label="表格样式"><option></option></select></span>
                    <i class="sep"></i>
                    <button class="tb" aria-label="多重引线样式"><svg class="ic"><use href="#i-mlstyle"/></svg></button>
                    <span class="combo w-style"><select aria-label="多重引线样式"><option></option></select></span>
                </div>
            </div>
            <div class="dock-row">
                <div class="toolbar">
                    <i class="grip"></i>
                    <span class="combo w-space"><select aria-label="工作空间"><option>zzz</option></select></span>
                    <button class="tb" aria-label="工作空间设置"><svg class="ic"><use href="#i-gear"/></svg></button>
                    <button class="tb" aria-label="我的工作空间"><svg class="ic"><use href="#i-wsave"/></svg></button>
                </div>
                <div class="toolbar">
                    <i class="grip"></i>
                    <button class="tb" aria-label="图层特性"><svg class="ic"><use href="#i-layers"/></svg></button>
                    <span class="combo w-layer">
                        <span class="layer-icons"><svg class="ic"><use href="#i-bulb"/></svg><svg class="ic"><use href="#i-sun"/></svg><svg class="ic"><use href="#i-vpfreeze"/></svg><svg class="ic"><use href="#i-lock"/></svg><svg class="ic"><use href="#i-swatch"/></svg></span>
                        <select aria-label="图层"><option>0</option></select>
                    </span>
                    <button class="tb" aria-label="置为当前图层"><svg class="ic"><use href="#i-laycur"/></svg></button>
                    <button class="tb" aria-label="上一个图层"><svg class="ic"><use href="#i-layprev"/></svg></button>
                    <button class="tb" aria-label="图层状态"><svg class="ic"><use href="#i-layers"/></svg></button>
                </div>
                <div class="toolbar mono">
                    <i class="grip"></i>
                    <span class="combo w-color"><svg class="ic combo-icon"><use href="#i-swatch"/></svg><select aria-label="颜色"><option>ByLayer</option></select></span>
                    <i class="sep"></i>
                    <span class="combo w-ltype"><i class="line-sample"></i><select aria-label="线型"><option>ByLayer</option></select></span>
                    <i class="sep"></i>
                    <span class="combo w-lweight"><i class="line-sample"></i><select aria-label="线宽"><option>ByLayer</option></select></span>
                    <i class="sep"></i>
                    <span class="combo w-plot"><select aria-label="打印样式" disabled><option>ByColor</option></select></span>
                </div>
            </div>
            <svg class="cursor" width="14" height="20"><path d="M1 1v14l3-3 3 7 3-1-3-7h5z" fill="#fff" stroke="#222"/></svg>
        </div>

        <main class="workspace">
            <div class="side left-side">
                <div class="toolbar vertical">
                    <i class="grip"></i>
                    <button class="tb" aria-label="直线"><svg class="ic"><use href="#i-line"/></svg></button>
                    <button class="tb" aria-label="构造线"><svg class="ic"><use href="#i-xline"/></svg></button>
                    <button class="tb" aria-label="多段线"><svg class="ic"><use href="#i-pline"/></svg></button>
                    <button class="tb" aria-label="多边形"><svg class="ic"><use href="#i-polygon"/></svg></button>
                    <button class="tb" aria-label="矩形"><svg class="ic"><use href="#i-rect"/></svg></button>
                    <button class="tb" aria-label="圆弧"><svg class="ic"><use href="#i-arc"/></svg></button>
                    <button class="tb" aria-label="圆"><svg class="ic"><use href="#i-circle"/></svg></button>
                    <button class="tb" aria-label="修订云线"><svg class="ic"><use href="#i-cloud"/></svg></button>
                    <button class="tb" aria-label="样条曲线"><svg class="ic"><use href="#i-spline"/></svg></button>
                    <button class="tb" aria-label="椭圆"><svg class="ic"><use href="#i-ellipse"/></svg></button>
                    <button class="tb" aria-label="椭圆弧"><svg class="ic"><use href="#i-earc"/></svg></button>
                    <button class="tb" aria-label="插入块"><svg class="ic"><use href="#i-insert"/></svg></button>
                    <button class="tb" aria-label="创建块"><svg class="ic"><use href="#i-mkblock"/></svg></button>
                    <button class="tb" aria-label="点"><svg class="ic"><use href="#i-point"/></svg></button>
                    <button class="tb" aria-label="图案填充"><svg class="ic"><use href="#i-hatch"/></svg></button>
                    <button class="tb" aria-label="渐变色"><svg class="ic"><use href="#i-gradient"/></svg></button>
                    <button class="tb" aria-label="面域"><svg class="ic"><use href="#i-region"/></svg></button>
                    <button class="tb" aria-label="表格"><svg class="ic"><use href="#i-table"/></svg></button>
                    <button class="tb" aria-label="多行文字"><svg class="ic"><use href="#i-mtext"/></svg></button>
                    <button class="tb" aria-label="添加选定对象"><svg class="ic"><use href="#i-addsel"/></svg></button>
                </div>
            </div>

            <div class="viewport">
                <div class="canvas">
                    <div class="view-label">[−][俯视][二维线框]</div>

                    <form class="dialog">
                        <div class="dialog-title">
                            <span class="dialog-logo"><svg class="ic"><use href="#i-logo"/></svg></span>
                            <h2>标注样式管理器</h2>
                            <button type="button" class="dialog-close" aria-label="关闭"><svg width="12" height="12"><path d="M2 2l8 8M10 2l-8 8" stroke="#eee" stroke-width="3"/></svg></button>
                        </div>
                        <div class="dialog-body">
                            <p class="current-style">当前标注样式: 副本 ISO-25</p>
                            <div class="dialog-cols">
                                <div class="style-col">
                                    <label class="list-label" id="styleLabel">样式(S):</label>
                                    <ul class="style-list" aria-labelledby="styleLabel">
                                        <li><svg class="ic annot" viewBox="0 0 16 16"><path d="M8 2l5 11-5-3-5 3z" fill="#a9c8dc" stroke="#3e6f92"/><path d="M8 5v4" stroke="#3e6f92"/></svg><span>Annotative</span></li>
                                        <li><span>ISO-25</span></li>
                                        <li><span>Standard</span></li>
                                        <li class="selected"><span>副本 ISO-25</span></li>
                                    </ul>
                                    <label class="filter-label" for="styleFilter">列出(L):</label>
                                    <span class="combo filter-combo"><select id="styleFilter"><option>所有样式</option></select></span>
                                    <label class="xref-check"><input type="checkbox" checked disabled>不列出外部参照中的样式(D)</label>
                                </div>
                                <div class="preview-col">
                                    <p class="preview-label">预览: 副本 ISO-25</p>
                                    <svg class="preview" viewBox="0 0 212 173">
                                        <g stroke="#7d6a2c" fill="none"><path d="M39.500 47.500h47v12h47L179 142.500H76A37 37 0 0 1 39.500 106z"/><circle cx="76" cy="104" r="24"/></g>
                                        <g stroke="#d5d8da" fill="none"><path d="M39.500 18v26M86.500 18v26M37 23.500h52M14 47.500h21M14 104.500h21M15.500 45v62M12 49l6-4M12 106l6-4M37 26l5-5M84 26l5-5M135 57l28-16M182 139l27-16M160 43l46 82M156 42l8 1M202 124l8 2M76 104l-46 59"/><path d="M118 142a61 61 0 0 1 31-54M115 139l6 5M145 87l7 3"/></g>
                                        <g class="preview-text"><text x="62" y="19">113</text><text transform="translate(13 75) rotate(-90)">133</text><text transform="translate(187 83) rotate(60)">225</text><text transform="translate(36 148) rotate(-53)">R80</text><text transform="translate(122 109) rotate(-66)">60°</text></g>
                                    </svg>
                                    <fieldset class="desc"><legend>说明</legend>副本 ISO-25</fieldset>
                                </div>
                                <div class="action-col">
                                    <button type="button">置为当前(U)</button>
                                    <button type="button">新建(N)...</button>
                                    <button type="button">修改(M)...</button>
                                    <button type="button">替代(O)...</button>
                                    <button type="button">比较(C)...</button>
                                </div>
                            </div>
                            <div class="dialog-footer"><button type="button" class="default">关闭</button><button type="button">帮助(H)</button></div>
                        </div>
                    </form>

                    <!-- model space geometry, kept in window coordinates -->
                    <svg class="drawing">
                        <g transform="translate(-41 -143)" fill="none" stroke="#fff">
                            <path d="M322 528A688 688 0 0 1 1484 469"/>
                            <path d="M471 612A517 517 0 0 1 1344 567"/>
                            <path d="M305 521L455 603M1357 558L1499 459M41 254L99 220"/>
                            <path d="M318 517l8 23M1471 467l26 4" stroke-width="4"/>
                            <path d="M781 160q1-9 4-17M834 143q4 8 5 15"/>
                            <path d="M1281 263L920 861" stroke-dasharray="3 3"/>
                            <g class="dim-text">
                                <text transform="translate(843 161) rotate(-2)">587</text>
                                <text transform="translate(75 212) rotate(-30)" text-anchor="end">29</text>
                                <text class="picked" transform="translate(1259 268) rotate(-58)" text-anchor="end">R290</text>
                            </g>
                            <path d="M1208 303h10v10h-10zM915 857h10v10h-10z" fill="#0a7cf0" stroke="#2a5fa8"/>
                            <path d="M1183 417h9v10h-9z" fill="#7db8ee" fill-opacity=".5" stroke="none"/>
                            <path d="M60.500 861v50.500H111M56.500 906.500h9v9h-9zM62 844l7 7 6-7M68.500 851v6M115 897l13 13M128 897l-13 13"/>
                        </g>
                    </svg>

                    <div class="toolbar dim-toolbar">
                        <i class="grip"></i>
                        <button class="tb" aria-label="线性"><svg class="ic"><use href="#d-lin"/></svg></button>
                        <button class="tb" aria-label="对齐"><svg class="ic"><use href="#d-ali"/></svg></button>
                        <button class="tb" aria-label="弧长"><svg class="ic"><use href="#d-arc"/></svg></button>
                        <button class="tb" aria-label="坐标"><svg class="ic"><use href="#d-ord"/></svg></button>
                        <i class="sep"></i>
                        <button class="tb" aria-label="半径"><svg class="ic"><use href="#d-rad"/></svg></button>
                        <button class="tb" aria-label="折弯"><svg class="ic"><use href="#d-jog"/></svg></button>
                        <button class="tb" aria-label="直径"><svg class="ic"><use href="#d-dia"/></svg></button>
                        <button class="tb" aria-label="角度"><svg class="ic"><use href="#d-ang"/></svg></button>
                        <i class="sep"></i>
                        <button class="tb" aria-label="快速标注"><svg class="ic"><use href="#d-quick"/></svg></button>
                        <button class="tb" aria-label="基线"><svg class="ic"><use href="#d-base"/></svg></button>
                        <button class="tb" aria-label="连续"><svg class="ic"><use href="#d-cont"/></svg></button>
                        <button class="tb" aria-label="等距标注"><svg class="ic"><use href="#d-space"/></svg></button>
                        <button class="tb" aria-label="折断标注"><svg class="ic"><use href="#d-break"/></svg></button>
                        <i class="sep"></i>
                        <button class="tb" aria-label="公差"><svg class="ic"><use href="#d-tol"/></svg></button>
                        <button class="tb" aria-label="圆心标记"><svg class="ic"><use href="#d-center"/></svg></button>
                        <button class="tb" aria-label="检验"><svg class="ic"><use href="#d-insp"/></svg></button>
                        <button class="tb" aria-label="折弯线性"><svg class="ic"><use href="#d-jogl"/></svg></button>
                        <i class="sep"></i>
                        <button class="tb" aria-label="编辑标注"><svg class="ic"><use href="#d-edit"/></svg></button>
                        <button class="tb" aria-label="编辑标注文字"><svg class="ic"><use href="#d-tedit"/></svg></button>
                        <button class="tb" aria-label="标注更新"><svg class="ic"><use href="#d-upd"/></svg></button>
                        <i class="sep"></i>
                        <span class="combo w-style"><select aria-label="标注样式"><option>副本 ISO-25</option></select></span>
                        <button class="tb" aria-label="标注样式管理"><svg class="ic"><use href="#i-dimstyle"/></svg></button>
                        <button class="bar-close" aria-label="关闭"><svg width="7" height="8"><path d="M1 1l5 6M6 1L1 7" stroke="#fff" stroke-width="2"/></svg></button>
                    </div>

                    <div class="view-cube">
                        <span class="north">北</span><span class="west">西</span><button class="cube-face">上</button><span class="east">东</span><span class="south">南</span>
                    </div>
                    <button class="wcs">WCS <svg width="10" height="6"><path d="M1 1h8L5 5z" fill="none" stroke="#a4a8b4"/></svg></button>
                </div>
                <div class="v-scroll"><i class="tri tri-up"></i><i class="thumb"></i><i class="tri"></i></div>
                <div class="layout-row">
                    <button class="nav-btn" aria-label="第一个"><svg width="12" height="12"><path d="M10 1v10L4 6zM2 1h1v10H2z"/></svg></button>
                    <button class="nav-btn" aria-label="上一个"><svg width="12" height="12"><path d="M9 1v10L3 6z"/></svg></button>
                    <button class="nav-btn" aria-label="下一个"><svg width="12" height="12"><path d="M3 1v10l6-5z"/></svg></button>
                    <button class="nav-btn" aria-label="最后一个"><svg width="12" height="12"><path d="M2 1v10l6-5zM9 1h1v10H9z"/></svg></button>
                    <button class="layout-tab active">模型</button><button class="layout-tab">布局1</button><button class="layout-tab">布局2</button>
                    <div class="h-scroll"><i class="tri tri-left"></i><i class="thumb"></i><i class="tri tri-right"></i></div>
                </div>
            </div>

            <div class="side right-side">
                <div class="toolbar vertical">
                    <i class="grip"></i>
                    <button class="tb" aria-label="删除"><svg class="ic"><use href="#i-erase"/></svg></button>
                    <button class="tb" aria-label="复制"><svg class="ic"><use href="#i-mcopy"/></svg></button>
                    <button class="tb" aria-label="镜像"><svg class="ic"><use href="#i-mirror"/></svg></button>
                    <button class="tb" aria-label="偏移"><svg class="ic"><use href="#i-offset"/></svg></button>
                    <button class="tb" aria-label="阵列"><svg class="ic"><use href="#i-array"/></svg></button>
                    <button class="tb" aria-label="移动"><svg class="ic"><use href="#i-move"/></svg></button>
                    <button class="tb" aria-label="旋转"><svg class="ic"><use href="#i-rotate"/></svg></button>
                    <button class="tb" aria-label="缩放"><svg class="ic"><use href="#i-scale"/></svg></button>
                    <button class="tb" aria-label="拉伸"><svg class="ic"><use href="#i-stretch"/></svg></button>
                    <button class="tb" aria-label="修剪"><svg class="ic"><use href="#i-trim"/></svg></button>
                    <button class="tb" aria-label="延伸"><svg class="ic"><use href="#i-extend"/></svg></button>
                    <button class="tb" aria-label="打断于点"><svg class="ic"><use href="#i-breakp"/></svg></button>
                    <button class="tb" aria-label="打断"><svg class="ic"><use href="#i-break"/></svg></button>
                    <button class="tb" aria-label="合并"><svg class="ic"><use href="#i-join"/></svg></button>
                    <button class="tb" aria-label="倒角"><svg class="ic"><use href="#i-chamfer"/></svg></button>
                    <button class="tb" aria-label="圆角"><svg class="ic"><use href="#i-fillet"/></svg></button>
                    <button class="tb" aria-label="光顺曲线"><svg class="ic"><use href="#i-blend"/></svg></button>
                    <button class="tb" aria-label="分解"><svg class="ic"><use href="#i-explode"/></svg></button>
                </div>
                <div class="toolbar vertical">
                    <i class="grip"></i>
                    <button class="tb" aria-label="前置"><svg class="ic"><use href="#i-front"/></svg></button>
                    <button class="tb" aria-label="后置"><svg class="ic"><use href="#i-back"/></svg></button>
                    <button class="tb" aria-label="置于对象之上"><svg class="ic"><use href="#i-above"/></svg></button>
                    <button class="tb" aria-label="置于对象之下"><svg class="ic"><use href="#i-under"/></svg></button>
                    <i class="sep"></i>
                    <button class="tb" aria-label="注释前置"><svg class="ic" viewBox="0 0 16 16"><use href="#i-annfront"/><text class="abc" x="0" y="7">ABC</text></svg></button>
                    <button class="tb" aria-label="图案填充后置"><svg class="ic"><use href="#i-hatchback"/></svg></button>
                </div>
            </div>
        </main>

        <section class="command">
            <div class="command-side"><i class="dots"></i>
                <svg width="12" height="10"><path d="M2 1l8 8M10 1L2 9" stroke="#fff" stroke-width="2"/></svg>
                <svg width="16" height="16"><path d="M5 5l9 9" stroke="#fff" stroke-width="3"/><path d="M2 1v4h4V1" stroke="#fff" stroke-width="2" fill="none"/></svg>
            </div>
            <div class="command-main">
                <div class="history"><p>命令:</p><p>命令: 指定对角点或 [栏选(F)/圈围(WP)/圈交(CP)]:</p></div>
                <div class="prompt">
                    <span class="prompt-icon"><svg width="14" height="12"><path d="M2 2l4 4-4 4M8 10h5" fill="none" stroke="#777" stroke-width="1.5"/></svg></span><i class="tri"></i>
                    <input type="text" value="'_dimstyle" aria-label="命令行">
                </div>
            </div>
        </section>

        <footer class="status-bar">
            <span class="coords">3105.0180, 1700.5387, 0.0000</span>
            <div class="toggles">
                <button aria-label="推断约束"><svg class="ic"><use href="#s-infer"/></svg></button>
                <button aria-label="捕捉"><svg class="ic"><use href="#s-snap"/></svg></button>
                <button aria-label="栅格"><svg class="ic"><use href="#s-grid"/></svg></button>
                <button class="on" aria-label="正交"><svg class="ic"><use href="#s-ortho"/></svg></button>
                <button aria-label="极轴"><svg class="ic"><use href="#s-polar"/></svg></button>
                <button class="on" aria-label="对象捕捉"><svg class="ic"><use href="#s-osnap"/></svg></button>
                <button aria-label="三维对象捕捉"><svg class="ic"><use href="#s-3dosnap"/></svg></button>
                <button class="on" aria-label="对象追踪"><svg class="ic"><use href="#s-otrack"/></svg></button>
                <button aria-label="动态UCS"><svg class="ic"><use href="#s-ducs"/></svg></button>
                <button aria-label="动态输入"><svg class="ic"><use href="#s-dyn"/></svg></button>
                <button aria-label="线宽"><svg class="ic"><use href="#s-lwt"/></svg></button>
                <button aria-label="透明度"><svg class="ic"><use href="#s-tpy"/></svg></button>
                <button aria-label="快捷特性"><svg class="ic"><use href="#s-qp"/></svg></button>
                <button aria-label="选择循环"><svg class="ic"><use href="#s-sc"/></svg></button>
                <button aria-label="注释监视器"><svg class="ic"><use href="#s-am"/></svg></button>
            </div>
            <div class="toggles right-toggles">
                <button class="wide">模型</button>
                <button aria-label="快速查看布局"><svg class="ic"><use href="#s-layout"/></svg></button>
                <button aria-label="快速查看图形"><svg class="ic"><use href="#s-views"/></svg></button>
            </div>
            <div class="toggles">
                <button class="scale"><svg class="ic"><use href="#s-ann"/></svg>1:1<i class="tri"></i></button>
                <button aria-label="注释可见性"><svg class="ic"><use href="#s-ann"/><circle cx="12" cy="11" r="3" fill="#fbd35a" stroke="#c80"/></svg></button>
                <button aria-label="自动添加比例"><svg class="ic faint"><use href="#s-ann"/></svg></button>
            </div>
            <div class="toggles tray">
                <button aria-label="切换工作空间"><svg class="ic"><use href="#i-gear"/></svg></button>
                <button aria-label="锁定"><svg class="ic"><use href="#s-lock"/></svg></button>
                <button aria-label="硬件加速"><svg class="ic"><use href="#s-hw"/></svg></button>
                <button class="pressed" aria-label="隔离对象"><svg class="ic"><use href="#i-bulb"/></svg></button>
                <button class="narrow" aria-label="状态栏菜单"><i class="tri"></i></button>
                <button aria-label="全屏显示"><svg class="ic"><use href="#s-clean"/></svg></button>
            </div>
            <svg class="resize" width="12" height="12"><path d="M9 1h2v2H9zM5 5h2v2H5zM9 5h2v2H9zM1 9h2v2H1zM5 9h2v2H5zM9 9h2v2H9z" fill="#eee"/></svg>
        </footer>
    </div>
</body>
</html>
```
FILE: styles.css
```css
:root {
    --ui-font: "Noto Sans", "Noto Sans CJK SC", sans-serif;
    --mono-font: "Liberation Mono", "Noto Sans CJK SC", monospace;
    --canvas: #21282f;
    --dock: #676767;
    --bar: #ebebeb;
    --edge: #3f3f3f;
    --ink: #555;
}

* {
    box-sizing: border-box;
}

html {
    background: #000;
}

body {
    margin: 0;
    height: 100vh;
    display: flex;
    flex-direction: column;
    padding: 3px 3px 43px 4px;
    background: #000;
    font-family: var(--ui-font);
    font-size: 12px;
    overflow: hidden;
}

button,
input,
select {
    font: inherit;
    color: inherit;
    margin: 0;
    padding: 0;
    border: 0;
    border-radius: 0;
    background: none;
}

p,
h2,
ul {
    margin: 0;
    padding: 0;
}

.sprite {
    position: absolute;
    width: 0;
    height: 0;
}

.ic {
    width: 16px;
    height: 16px;
    flex: none;
    display: block;
    fill: none;
    stroke: var(--ink);
    stroke-width: 1;
}

.dim {
    opacity: .6;
}

.faint {
    opacity: .45;
}

.abc {
    font: bold 7px "Liberation Sans", sans-serif;
    fill: #000;
    stroke: none;
}

.tri {
    display: block;
    flex: none;
    width: 0;
    height: 0;
    border: 4px solid transparent;
    border-top: 5px solid #333;
    border-bottom: 0;
}

.tri-up {
    border: 4px solid transparent;
    border-bottom: 5px solid #333;
    border-top: 0;
}

.tri-left {
    border: 4px solid transparent;
    border-right: 5px solid #333;
    border-left: 0;
}

.tri-right {
    border: 4px solid transparent;
    border-left: 5px solid #111;
    border-right: 0;
}

/* window frame */
.app {
    position: relative;
    flex: 1;
    min-height: 0;
    display: flex;
    flex-direction: column;
    border: 1px solid #7c7c7c;
    border-radius: 7px 7px 0 0;
    padding: 0 6px 3px 5px;
    background: linear-gradient(90deg, #0b0c0e, #000 30%, #000 60%, #17181b 78%, #0c0d0e);
}

/* desktop seen through the right glass border */
.app::after {
    content: "";
    position: absolute;
    top: 165px;
    right: -3px;
    width: 8px;
    height: 740px;
    background:
        linear-gradient(90deg, #f0c4b0 5px, #b8602c 5px) 0 104px / 8px 4px no-repeat,
        linear-gradient(90deg, #f0c4b0 5px, #b8602c 5px) 0 325px / 8px 4px no-repeat,
        linear-gradient(90deg, #f0c4b0 5px, #b8602c 5px) 0 500px / 8px 4px no-repeat,
        linear-gradient(transparent, #bfeaf5 20px, #fff 60px, #fff 690px, #9db4d0 725px, transparent);
}

.tb {
    width: 23px;
    flex: none;
    display: flex;
    align-items: center;
    justify-content: center;
}

.tb-arrow {
    width: 13px;
    flex: none;
    display: flex;
    align-items: center;
    justify-content: center;
}

.tb-arrow .tri {
    border-width: 4px 3px 0;
}

/* title bar */
.title-bar {
    display: flex;
    height: 30px;
    padding-left: 40px;
}

.app-menu {
    position: absolute;
    left: 5px;
    top: 6px;
    width: 41px;
    height: 42px;
    display: flex;
    align-items: center;
    gap: 1px;
    padding-left: 4px;
    background: linear-gradient(#d0d0d0, #8b8b8b);
    border: 1px solid #1d1d1d;
    z-index: 2;
}

.logo {
    width: 24px;
    height: 28px;
}

.quick-access,
.info-center {
    display: flex;
    height: 23px;
    margin-top: 6px;
    background: linear-gradient(#a9a9a9, #7d7d7d);
    border: 1px solid #5d5d5d;
}

.quick-access {
    padding-left: 5px;
}

.quick-access .tb {
    width: 24px;
}

.quick-access .tb-arrow {
    width: 12px;
}

.qa-more {
    flex: none;
    width: 16px;
    display: flex;
    align-items: center;
    justify-content: center;
}

.caption {
    flex: 1;
    display: flex;
    justify-content: center;
    gap: 24px;
    padding-top: 5px;
    line-height: 18px;
    color: #000;
}

.caption span {
    align-self: flex-start;
    background: #4b4b4b;
    box-shadow: 0 0 8px 4px #4b4b4b;
    border-radius: 6px;
}

.info-toggle {
    width: 14px;
    display: flex;
    align-items: center;
    justify-content: center;
}

.info-search {
    width: 179px;
    background: #f6f6f6;
    padding: 2px 3px 0;
    font-style: italic;
}

.info-search::placeholder {
    color: #666;
    opacity: 1;
}

.sign-in {
    width: 121px;
    display: flex;
    align-items: center;
    gap: 5px;
    padding: 0 5px;
    color: #fff;
}

.sign-in .tri {
    margin-left: auto;
    border-width: 4px 3px 0;
}

.info-center .info-help {
    margin-left: 10px;
}

.win-buttons {
    display: flex;
    height: 19px;
    margin-left: 21px;
    border: 1px solid #8d8d8d;
    border-top: 0;
    border-radius: 0 0 4px 4px;
    background: linear-gradient(#4a4c50, #222326);
}

.win-buttons button {
    width: 27px;
    display: flex;
    align-items: center;
    justify-content: center;
    border-right: 1px solid #77797c;
}

.win-buttons .win-close {
    width: 46px;
    border-right: 0;
}

/* menu bar */
.menu-bar {
    display: flex;
    align-items: center;
    height: 21px;
    padding: 0 0 2px 42px;
    background: linear-gradient(#9c9c9c, #5c5c5c);
    color: #fff;
}

.menu-bar button {
    padding: 0 12px 0 13px;
}

.doc-buttons {
    margin-left: auto;
    height: 14px;
}

/* file tabs */
.file-tabs {
    position: relative;
    display: flex;
    height: 27px;
    padding: 4px 0 0 16px;
    background: linear-gradient(#a5a5a5, #8f8f8f);
    border-bottom: 1px solid #bdbdbd;
}

.tab-shape {
    position: absolute;
    left: 16px;
    top: 4px;
}

.file-tab {
    position: relative;
    width: 134px;
    display: flex;
    align-items: center;
    justify-content: space-between;
    padding: 0 17px 2px 16px;
    color: #1c1c1c;
}

.tab-close {
    font-size: 10px;
    color: #777;
}

.new-tab {
    position: relative;
    height: 17px;
    margin-top: 1px;
}

/* docked toolbars */
.dock {
    position: relative;
    display: flex;
    flex-direction: column;
    gap: 4px;
    padding: 4px 0 5px;
    background: var(--dock);
}

.dock-row {
    display: flex;
    gap: 1px;
}

.toolbar {
    display: flex;
    height: 23px;
    background: var(--bar);
    border: 1px solid var(--edge);
}

.grip {
    flex: none;
    width: 8px;
    background: radial-gradient(#111 1px, transparent 1px) 1px 0 / 3px 3px, #6b6b6b;
}

.sep {
    flex: none;
    width: 6px;
    background: linear-gradient(90deg, transparent 2px, #999 2px, #999 3px, transparent 3px);
}

.styles-toolbar .sep {
    width: 7px;
}

.combo {
    position: relative;
    flex: none;
    display: flex;
    background: linear-gradient(#fcfcfc, #dcdcdc);
    border: 1px solid #9a9a9a;
    border-radius: 2px;
    color: #666;
}

.combo select {
    appearance: none;
    flex: 1;
    min-width: 0;
    padding: 0 16px 0 7px;
}

.combo select:disabled {
    opacity: 1;
    color: #666;
}

.combo::after {
    content: "";
    position: absolute;
    right: 4px;
    top: 50%;
    margin-top: -2px;
    border: 4px solid transparent;
    border-top: 5px solid #333;
    border-bottom: 0;
    pointer-events: none;
}

.combo-icon {
    align-self: center;
    margin-left: 2px;
}

.workspace-combo {
    width: 181px;
    color: #111;
}

.workspace-combo select {
    padding-left: 3px;
}

.w-style {
    width: 119px;
}

.w-style select {
    padding-left: 17px;
}

.w-space {
    width: 174px;
}

.w-layer {
    width: 300px;
}

.layer-icons {
    display: flex;
    align-items: center;
    padding-left: 2px;
}

.w-layer select {
    padding-left: 3px;
}

.mono {
    font-family: var(--mono-font);
    font-size: 10px;
}

.w-color {
    width: 149px;
}

.w-color .combo-icon {
    margin-left: 1px;
}

.w-color select {
    padding-left: 0;
}

.w-ltype {
    width: 160px;
}

.w-lweight {
    width: 125px;
}

.w-plot {
    width: 119px;
}

.w-plot::after {
    border-top-color: #999;
}

.line-sample {
    align-self: center;
    width: 60px;
    margin-left: 4px;
    border-top: 1px solid #000;
}

.w-ltype select,
.w-lweight select {
    padding-left: 5px;
}

.w-lweight .line-sample {
    width: 34px;
}

.cursor {
    position: absolute;
    left: 821px;
    top: 18px;
}

/* workspace */
.workspace {
    flex: 1;
    min-height: 0;
    display: flex;
    background: var(--dock);
    padding-bottom: 4px;
}

.side {
    flex: none;
    display: flex;
    flex-direction: column;
    gap: 3px;
}

.left-side {
    width: 29px;
}

.right-side {
    width: 31px;
    padding: 7px 0 0 3px;
}

.vertical {
    flex-direction: column;
    width: 25px;
    height: auto;
}

.vertical .tb {
    height: 22px;
}

.vertical .grip {
    width: auto;
    height: 8px;
}

.vertical .sep {
    width: auto;
    height: 3px;
    margin: 0 2px;
    background: linear-gradient(transparent 1px, #999 1px, #999 2px, transparent 2px);
}

.viewport {
    flex: 1;
    min-width: 0;
    display: grid;
    grid-template-columns: 1fr 19px;
    grid-template-rows: 1fr 16px;
    border: 2px solid #a8a8a8;
    border-right-color: #fff;
    border-bottom-color: #fff;
}

.canvas {
    position: relative;
    overflow: hidden;
    background: var(--canvas);
}

.drawing {
    position: absolute;
    inset: 0;
    width: 100%;
    height: 100%;
    pointer-events: none;
}

.dim-text {
    font-family: "Liberation Sans", sans-serif;
    font-size: 50px;
    fill: #fff;
    stroke: none;
}

.dim-text .picked {
    fill: url(#p-check);
}

.view-label {
    padding: 6px 4px;
    line-height: 16px;
    color: #e4e4e4;
}

.dim-toolbar {
    position: absolute;
    left: 497px;
    top: 55px;
    border-color: #555;
}

.bar-close {
    width: 8px;
    display: flex;
    align-items: flex-start;
    background: #555;
}

/* view cube */
.view-cube {
    position: absolute;
    top: 14px;
    right: 15px;
    width: 136px;
    height: 136px;
    display: grid;
    grid-template-columns: 24px 88px 24px;
    grid-template-rows: 24px 88px 24px;
    place-items: center;
    background: radial-gradient(circle, transparent 47px, #40474f 48px, #40474f 60px, transparent 61px);
    font-size: 18px;
    line-height: 20px;
    color: #adb0b2;
}

.north,
.south {
    grid-column: 2;
}

.west {
    grid-column: 1;
}

.cube-face {
    width: 52px;
    height: 52px;
    border: 9px solid #a0a2a4;
    outline: 1px solid #777;
    background: #959da2;
    color: #555b5e;
    font-size: 30px;
    line-height: 32px;
}

.wcs {
    position: absolute;
    right: 58px;
    top: 169px;
    width: 48px;
    height: 18px;
    background: #818691;
    border: 1px solid #9a9eaa;
    border-radius: 4px;
    color: #3d4148;
    font: 11px "Liberation Sans", sans-serif;
}

/* scrollbars and layout tabs */
.v-scroll {
    display: flex;
    flex-direction: column;
    align-items: center;
    justify-content: space-between;
    padding: 7px 0 5px;
    background: #efefef;
}

.thumb {
    display: block;
    width: 15px;
    height: 15px;
    background: linear-gradient(90deg, #fff, #c6c6c6);
    border: 1px solid #8b8b8b;
    border-radius: 2px;
}

.v-scroll .thumb {
    margin-bottom: 480px;
}

.layout-row {
    grid-column: 1 / -1;
    display: flex;
    background: #efefef;
    border-top: 1px solid #777;
}

.nav-btn {
    width: 14px;
    display: flex;
    align-items: center;
    justify-content: center;
    border-right: 1px solid #999;
    fill: #555;
}

.layout-tab {
    width: 45px;
    padding-right: 4px;
    line-height: 14px;
    white-space: nowrap;
    color: #111;
    background: linear-gradient(108deg, transparent 40px, #444 40px, #444 41px, transparent 41px);
}

.layout-tab.active {
    padding: 0;
    margin-left: 1px;
    color: #fff;
    background: var(--canvas);
    clip-path: polygon(0 0, 100% 0, 90% 100%, 12% 100%);
}

.h-scroll {
    width: 637px;
    margin-left: auto;
    display: flex;
    align-items: center;
    justify-content: space-between;
    padding: 0 24px 0 8px;
    border-left: 4px double #999;
}

.h-scroll .thumb {
    height: 14px;
    margin-right: 130px;
}

/* command line */
.command {
    display: flex;
    height: 57px;
    border-top: 1px solid #8a8a8a;
    border-bottom: 1px solid #777;
    font-family: var(--mono-font);
}

.command-side {
    flex: none;
    width: 23px;
    display: flex;
    flex-direction: column;
    align-items: center;
    gap: 9px;
    padding-top: 4px;
    background: linear-gradient(#8f8f8f, #454545);
}

.dots {
    width: 17px;
    height: 6px;
    background: radial-gradient(#ccc 1px, transparent 1px) 0 0 / 3px 3px;
}

.command-main {
    flex: 1;
}

.history {
    height: 34px;
    padding: 1px 2px;
    line-height: 16px;
    background: #c7c7c7;
    color: #111;
    border-bottom: 1px solid #777;
}

.prompt {
    display: flex;
    align-items: center;
    gap: 4px;
    height: 21px;
    padding-left: 5px;
    background: #fff;
    color: #111;
}

.prompt-icon {
    display: flex;
    background: #ddd;
    border: 1px solid #999;
}

.prompt .tri {
    border-width: 4px 3px 0;
    border-top-color: #888;
}

.prompt input {
    flex: 1;
    outline: 0;
}

/* status bar */
.status-bar {
    display: flex;
    height: 23px;
    margin-top: 1px;
    background: linear-gradient(#949494, #727272);
}

.coords {
    width: 217px;
    padding-left: 11px;
    font: 10px/25px var(--mono-font);
    color: #111;
}

.toggles {
    display: flex;
    border-left: 1px solid #666;
}

.toggles button {
    width: 22px;
    display: flex;
    align-items: center;
    justify-content: center;
    background: linear-gradient(#c4c4c4, #9c9c9c);
    border-right: 1px solid #666;
    color: #111;
}

.toggles .on {
    background: linear-gradient(#e4f6fb, #a3d0dd);
}

.right-toggles {
    margin-left: auto;
    margin-right: 18px;
}

.toggles .wide {
    width: 30px;
}

.toggles .scale {
    width: 53px;
    gap: 3px;
}

.tray {
    margin: 0 5px;
}

.tray .pressed {
    width: 34px;
    background: #777;
    border: 3px solid #a9a9a9;
    border-right-width: 6px;
}

.tray .narrow {
    width: 12px;
}

.resize {
    align-self: flex-end;
}

/* dimension style manager */
.dialog {
    position: absolute;
    left: 661px;
    top: 193px;
    width: 516px;
    padding: 0 6px 6px;
    border: 1px solid #9aa8b4;
    border-radius: 6px;
    background: linear-gradient(100deg, #6b7884, #7d8892 18%, #33475c 36%, #2e4256 60%, #6d7883 82%, #4c5e70);
    box-shadow: 0 0 8px #0a0d10;
    color: #1b1b1b;
}

.dialog-title {
    display: flex;
    align-items: center;
    gap: 4px;
    height: 27px;
    padding-bottom: 3px;
}

.dialog-title h2 {
    flex: 1;
    font-size: 12px;
    font-weight: normal;
}

.dialog-logo {
    padding: 1px;
    background: #b88;
}

.dialog-logo .ic {
    width: 14px;
    height: 14px;
}

.dialog-close {
    align-self: flex-start;
    width: 46px;
    height: 18px;
    display: flex;
    align-items: center;
    justify-content: center;
    background: linear-gradient(#c07a70, #98332a 50%, #a8443a);
    border: 1px solid #c9b0ac;
    border-top: 0;
    border-radius: 0 0 4px 4px;
}

.dialog-body {
    padding: 10px 10px 14px;
    background: #bfc0c2;
    border: 1px solid #2f3c4a;
    border-width: 1px 0 0 1px;
}

.current-style {
    line-height: 18px;
}

.dialog-cols {
    display: grid;
    grid-template-columns: 163px 212px 72px;
    justify-content: space-between;
}

.style-col {
    display: flex;
    flex-direction: column;
}

.list-label {
    line-height: 20px;
}

.style-list {
    height: 177px;
    padding: 2px 0;
    list-style: none;
    background: #cacbcd;
    border: 1px solid #77797b;
}

.style-list li {
    position: relative;
    padding-left: 22px;
    height: 16px;
    line-height: 16px;
    font-family: var(--mono-font);
    font-size: 10px;
}

.style-list span {
    display: inline-block;
    line-height: 16px;
    padding: 0 1px;
}

.style-list .selected span {
    background: #2f7fcb;
    color: #dfe8f0;
    font-family: var(--ui-font);
    font-size: 12px;
    line-height: 15px;
}

.annot {
    position: absolute;
    left: 3px;
    top: 0;
}

.filter-label {
    line-height: 22px;
}

.filter-combo {
    height: 19px;
    background: linear-gradient(#cfd0d1, #acadaf);
    border-color: #6d6f71;
    color: #111;
}

.filter-combo select {
    padding-left: 3px;
}

.xref-check {
    display: flex;
    align-items: center;
    gap: 3px;
    margin-top: 5px;
    line-height: 20px;
    white-space: nowrap;
    color: #77797b;
}

.xref-check input {
    appearance: none;
    width: 13px;
    height: 13px;
    border: 1px solid #8d8f91;
}

.xref-check input:checked::before {
    content: "✓";
    display: block;
    font-size: 11px;
    line-height: 11px;
    text-align: center;
}

.preview-label {
    line-height: 14px;
    margin-bottom: 8px;
}

.preview {
    display: block;
    width: 212px;
    height: 173px;
    background: var(--canvas);
}

.preview-text {
    font: bold 12px "Liberation Sans", sans-serif;
    fill: #e4e6e8;
    text-anchor: middle;
}

.desc {
    height: 60px;
    margin: 3px 0 0;
    padding: 1px 9px;
    border: 1px solid #b2b4b6;
    line-height: 16px;
}

.desc legend {
    padding: 0;
    line-height: 14px;
}

.action-col {
    display: flex;
    flex-direction: column;
    gap: 10px;
    padding-top: 21px;
}

.action-col button,
.dialog-footer button {
    width: 72px;
    height: 18px;
    line-height: 16px;
    white-space: nowrap;
    background: linear-gradient(#cbccce, #a9abad);
    border: 1px solid #707274;
    border-radius: 2px;
}

.dialog-footer {
    display: flex;
    justify-content: flex-end;
    gap: 10px;
    margin-top: 7px;
}

.dialog-footer .default {
    border-color: #2d86a8;
    box-shadow: inset 0 0 0 1px #77c1dc;
}
```
